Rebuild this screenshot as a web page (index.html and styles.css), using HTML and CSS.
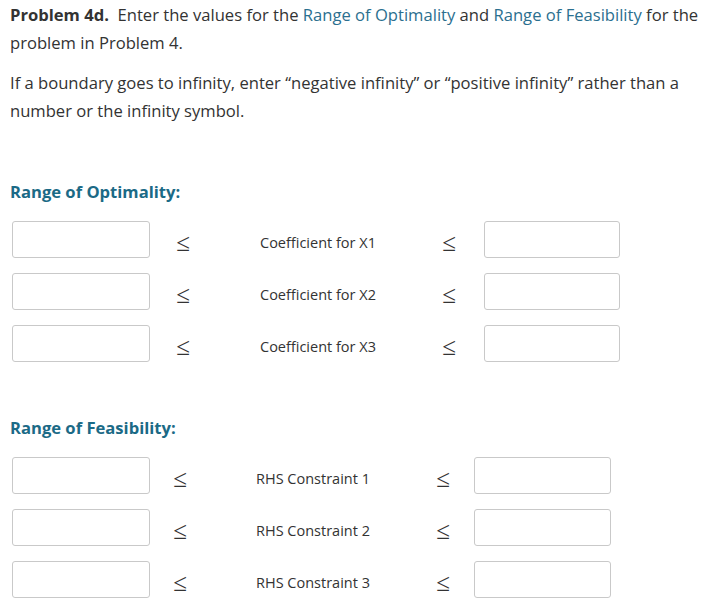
FILE: index.html
```html
<!DOCTYPE html>
<html>
<head>
<meta charset="utf-8">
<link rel="stylesheet" href="styles.css">
</head>
<body>
<p class="intro"><b>Problem 4d.</b>&nbsp; Enter the values for the <span class="link">Range of Optimality</span> and <span class="link">Range of Feasibility</span> for the problem in Problem 4.</p>
<p class="intro">If a boundary goes to infinity, enter “negative infinity” or “positive infinity” rather than a number or the infinity symbol.</p>

<h3 class="section-title first">Range of Optimality:</h3>
<div class="range opt">
  <div class="box"></div><span class="sym">≤</span><span class="label">Coefficient for X1</span><span class="sym">≤</span><div class="box"></div>
  <div class="box"></div><span class="sym">≤</span><span class="label">Coefficient for X2</span><span class="sym">≤</span><div class="box"></div>
  <div class="box"></div><span class="sym">≤</span><span class="label">Coefficient for X3</span><span class="sym">≤</span><div class="box"></div>
</div>

<h3 class="section-title">Range of Feasibility:</h3>
<div class="range feas">
  <div class="box"></div><span class="sym">≤</span><span class="label">RHS Constraint 1</span><span class="sym">≤</span><div class="box"></div>
  <div class="box"></div><span class="sym">≤</span><span class="label">RHS Constraint 2</span><span class="sym">≤</span><div class="box"></div>
  <div class="box"></div><span class="sym">≤</span><span class="label">RHS Constraint 3</span><span class="sym">≤</span><div class="box"></div>
</div>
</body>
</html>
```

FILE: styles.css
```css
html, body {
  margin: 0;
  background: #ffffff;
}
body {
  padding: 1px 10px 0 10px;
  font-family: "Open Sans", "Liberation Sans", sans-serif;
  font-size: 16.6px;
  line-height: 28px;
  color: #333333;
}
.intro {
  margin: 0 0 12px 0;
}
.intro b {
  font-weight: 700;
}
.link {
  color: #2b6f8f;
}
.section-title {
  margin: 52px 0 15px 0;
  font-size: 16.6px;
  line-height: 28px;
  font-weight: 700;
  color: #1b6a86;
}
.section-title.first {
  margin-top: 53px;
}
.range {
  display: grid;
  row-gap: 15px;
  align-items: center;
  margin-left: 2px;
}
.range.opt {
  grid-template-columns: 138px 66px 200px 66px 138px;
}
.range.feas {
  grid-template-columns: 138px 60px 203px 60px 138px;
}
.box {
  height: 37px;
  box-sizing: border-box;
  border: 1px solid #c9c9c9;
  border-radius: 3px;
  background: #fff;
}
.sym {
  text-align: center;
  font-family: "Liberation Serif", serif;
  font-size: 25px;
  line-height: 24px;
  color: #333;
  padding-top: 7px;
}
.label {
  font-size: 14.5px;
  line-height: 20px;
  color: #333;
  padding-top: 7px;
  padding-left: 44px;
}
.range.feas .label {
  padding-left: 46px;
}
.range .sym + .box {
  margin-left: 2px;
}
.range.feas .sym + .box {
  margin-left: 1px;
}
```
